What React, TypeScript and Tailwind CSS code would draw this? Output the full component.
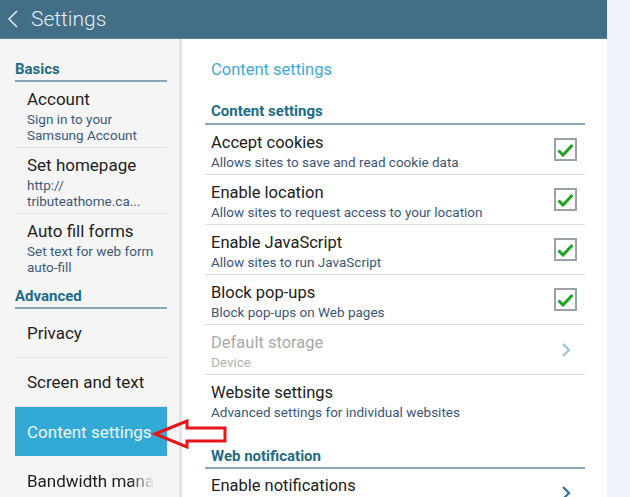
import React from "react";

const font = { fontFamily: "Roboto, 'Noto Sans', sans-serif" };

function SideHeader({ label, className = "" }: { label: string; className?: string }) {
  return (
    <div className={`flex items-end border-b-2 border-[#8aa7b6] pb-[2px] ${className}`}>
      <span className="text-[15px] font-bold leading-[18px] text-[#1d6c88]">{label}</span>
    </div>
  );
}

function SideItem({ title, lines, border = true }: { title: string; lines: string[]; border?: boolean }) {
  return (
    <div className={`px-3 pt-[6.5px] pb-[3.5px] ${border ? "border-b border-[#e2e2e2]" : ""}`}>
      <div className="text-[17px] leading-[20px] text-[#1e1e1e]">{title}</div>
      <div className="mt-[2px]">
        {lines.map((l) => (
          <div key={l} className="text-[13.5px] leading-[16.5px] text-[#3f5a78]">
            {l}
          </div>
        ))}
      </div>
    </div>
  );
}

function SideRow({ title, active, last }: { title: string; active?: boolean; last?: boolean }) {
  return (
    <div
      className={`flex h-[49px] items-center px-3 ${
        active ? "bg-[#33a9d6] text-[#eef8fc]" : "text-[#1e1e1e]"
      } ${last || active ? "" : "border-b border-[#e2e2e2]"}`}
    >
      <span
        className={`overflow-hidden whitespace-nowrap text-[17px] leading-[20px] ${
          last ? "[mask-image:linear-gradient(to_right,black_80%,transparent)]" : ""
        }`}
      >
        {title}
      </span>
    </div>
  );
}

function Check() {
  return (
    <div className="flex h-[23px] w-[23px] items-center justify-center border-2 border-[#9aa2a8] bg-white">
      <svg width="17" height="14" viewBox="0 0 17 14">
        <path d="M1.5 7.5 L6 12 L15.5 2" fill="none" stroke="#1fa41f" strokeWidth="3" strokeLinejoin="miter" />
      </svg>
    </div>
  );
}

function Chevron({ color }: { color: string }) {
  return (
    <svg width="10" height="16" viewBox="0 0 10 16">
      <path d="M2 2 L8 8 L2 14" fill="none" stroke={color} strokeWidth="2.2" />
    </svg>
  );
}

function Row({
  title,
  sub,
  right,
  disabled,
  border = true,
}: {
  title: string;
  sub?: string;
  right?: React.ReactNode;
  disabled?: boolean;
  border?: boolean;
}) {
  return (
    <div className={`flex h-[50px] items-center pl-[6px] pr-2 ${border ? "border-b border-[#dedede]" : ""}`}>
      <div className="flex-1 self-start pt-[7.5px]">
        <div className={`text-[16.5px] leading-[20px] ${disabled ? "text-[#a9a9a9]" : "text-[#202020]"}`}>{title}</div>
        {sub && (
          <div className={`mt-[1px] text-[13.5px] leading-[16px] ${disabled ? "text-[#b3b3b3]" : "text-[#3c5675]"}`}>
            {sub}
          </div>
        )}
      </div>
      <div className="flex w-[23px] justify-center">{right}</div>
    </div>
  );
}

function MainHeader({ label, className = "" }: { label: string; className?: string }) {
  return (
    <div className={`flex items-end border-b-2 border-[#8aa7b6] pl-[6px] ${className}`}>
      <span className="text-[15px] font-bold leading-[18px] text-[#1d6c88]">{label}</span>
    </div>
  );
}

export default function App() {
  return (
    <div style={font} className="relative flex h-[497px] w-[630px] overflow-hidden bg-[#eef2fa]">
      <div className="flex w-[607px] flex-col">
        {/* top bar */}
        <div className="flex h-[39px] shrink-0 items-center border-b border-[#5a8299] bg-[#426e87]">
          <svg width="14" height="20" viewBox="0 0 14 20" className="ml-[6px]">
            <path d="M11 2 L3 10 L11 18" fill="none" stroke="#e3ebf0" strokeWidth="1.5" />
          </svg>
          <span className="ml-[11px] text-[21px] font-light leading-none text-[#e6edf1]">Settings</span>
        </div>

        <div className="flex flex-1">
          {/* sidebar */}
          <div className="w-[182px] shrink-0 border-r-[3px] border-[#e4e4e4] bg-[#f5f5f5] pl-[15px] pr-[12px]">
            <SideHeader label="Basics" className="h-[43px]" />
            <SideItem title="Account" lines={["Sign in to your", "Samsung Account"]} />
            <SideItem title="Set homepage" lines={["http://", "tributeathome.ca..."]} />
            <SideItem title="Auto fill forms" lines={["Set text for web form", "auto-fill"]} border={false} />
            <SideHeader label="Advanced" className="h-[30px]" />
            <SideRow title="Privacy" />
            <SideRow title="Screen and text" />
            <SideRow title="Content settings" active />
            <SideRow title="Bandwidth management" last />
          </div>

          {/* main */}
          <div className="flex-1 bg-white pl-[23px] pr-[22px]">
            <div className="flex h-[41px] items-end pl-[6px]">
              <span className="text-[16.5px] leading-[20px] text-[#3eaad8]">Content settings</span>
            </div>
            <MainHeader label="Content settings" className="h-[45px] pb-[3px]" />
            <Row title="Accept cookies" sub="Allows sites to save and read cookie data" right={<Check />} />
            <Row title="Enable location" sub="Allow sites to request access to your location" right={<Check />} />
            <Row title="Enable JavaScript" sub="Allow sites to run JavaScript" right={<Check />} />
            <Row title="Block pop-ups" sub="Block pop-ups on Web pages" right={<Check />} />
            <Row title="Default storage" sub="Device" disabled right={<Chevron color="#9cc2df" />} />
            <Row title="Website settings" sub="Advanced settings for individual websites" border={false} />
            <MainHeader label="Web notification" className="h-[44px] pb-[2px]" />
            <div className="flex items-start pl-[6px] pr-2 pt-[7px]">
              <div className="flex-1 text-[16.5px] leading-[20px] text-[#202020]">Enable notifications</div>
              <div className="mt-[9px] flex w-[23px] justify-center">
                <Chevron color="#2c6ea6" />
              </div>
            </div>
          </div>
        </div>
      </div>

      {/* annotation arrow */}
      <svg className="pointer-events-none absolute left-0 top-0" width="630" height="497">
        <polygon
          points="155,434 187,421 187,428 225,428 225,441 187,441 187,447"
          fill="none"
          stroke="#e8141c"
          strokeWidth="3"
        />
      </svg>
    </div>
  );
}
